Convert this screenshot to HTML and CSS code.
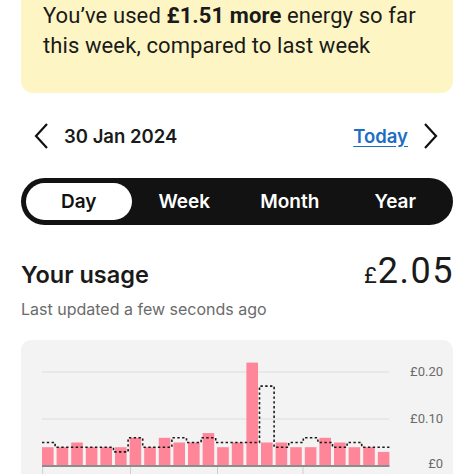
FILE: index.html
```html
<!DOCTYPE html>
<html>
    <head>
        <link rel="stylesheet" href="styles.css">
    </head>
    <body>
        <div class="page">
            <div class="notice">
                <p>You’ve used <b>£1.51 more</b> energy so far this week, compared to last week</p>
            </div>

            <div class="date-row">
                <svg class="chev" viewBox="0 0 16 28"><polyline points="14,2 3,14 14,26"/></svg>
                <span class="date">30 Jan 2024</span>
                <a class="today" href="#">Today</a>
                <svg class="chev" viewBox="0 0 16 28"><polyline points="2,2 13,14 2,26"/></svg>
            </div>

            <div class="tabs">
                <div class="tab active">Day</div>
                <div class="tab">Week</div>
                <div class="tab">Month</div>
                <div class="tab">Year</div>
            </div>

            <div class="usage">
                <h2>Your usage</h2>
                <div class="total"><span class="pound">£</span>2.05</div>
            </div>
            <p class="updated">Last updated a few seconds ago</p>

            <div class="chart">
                <svg viewBox="0 0 432 150" width="432" height="150">
                    <g class="grid">
                        <line x1="21" y1="32" x2="368" y2="32"/>
                        <line x1="21" y1="79" x2="368" y2="79"/>
                    </g>
                    <g class="ticks">
                        <line x1="21.7" y1="126" x2="21.7" y2="150"/>
                        <line x1="109.5" y1="126" x2="109.5" y2="150"/>
                        <line x1="196.5" y1="126" x2="196.5" y2="150"/>
                        <line x1="282" y1="126" x2="282" y2="150"/>
                    </g>
                    <g class="bars">
                        <rect x="21.0" y="107.2" width="11.6" height="18.8"/>
                        <rect x="35.6" y="107.2" width="11.6" height="18.8"/>
                        <rect x="50.2" y="102.5" width="11.6" height="23.5"/>
                        <rect x="64.8" y="107.2" width="11.6" height="18.8"/>
                        <rect x="79.4" y="107.2" width="11.6" height="18.8"/>
                        <rect x="94.0" y="107.2" width="11.6" height="18.8"/>
                        <rect x="108.6" y="97.8" width="11.6" height="28.2"/>
                        <rect x="123.2" y="107.2" width="11.6" height="18.8"/>
                        <rect x="137.8" y="97.8" width="11.6" height="28.2"/>
                        <rect x="152.4" y="102.5" width="11.6" height="23.5"/>
                        <rect x="167.0" y="102.5" width="11.6" height="23.5"/>
                        <rect x="181.6" y="93.1" width="11.6" height="32.9"/>
                        <rect x="196.2" y="107.2" width="11.6" height="18.8"/>
                        <rect x="210.8" y="102.5" width="11.6" height="23.5"/>
                        <rect x="225.4" y="22.6" width="11.6" height="103.4"/>
                        <rect x="240.0" y="102.5" width="11.6" height="23.5"/>
                        <rect x="254.6" y="102.5" width="11.6" height="23.5"/>
                        <rect x="269.2" y="107.2" width="11.6" height="18.8"/>
                        <rect x="283.8" y="107.2" width="11.6" height="18.8"/>
                        <rect x="298.4" y="97.8" width="11.6" height="28.2"/>
                        <rect x="313.0" y="102.5" width="11.6" height="23.5"/>
                        <rect x="327.6" y="107.2" width="11.6" height="18.8"/>
                        <rect x="342.2" y="107.2" width="11.6" height="18.8"/>
                        <rect x="356.8" y="111.9" width="11.6" height="14.1"/>
                    </g>
                    <!-- last week -->
                    <path class="last-week" d="M21 102.5 H34.1 V107.2 H92.5 V111.9 H107.1 V97.8 H121.7 V107.2 H150.9 V97.8 H165.5 V102.5 H180.1 V97.8 H194.7 V102.5 H238.5 V46.1 H253.1 V107.2 H267.7 V102.5 H282.3 V97.8 H296.9 V102.5 H311.5 V107.2 H326.1 V102.5 H340.7 V107.2 H368.4"/>
                    <line class="axis" x1="21" y1="126" x2="368.4" y2="126"/>
                    <g class="labels">
                        <text x="422" y="35.7">£0.20</text>
                        <text x="422" y="83.3">£0.10</text>
                        <text x="422" y="128.3">£0</text>
                    </g>
                </svg>
            </div>
        </div>
    </body>
</html>
```

FILE: styles.css
```css
* {
    box-sizing: border-box;
}

body {
    margin: 0;
    background: #ffffff;
    color: #1a1a1a;
    font-family: Inter, "Noto Sans", sans-serif;
}

.page {
    height: 474px;
    overflow: hidden;
    padding: 0 21px;
}

.notice {
    margin-top: -20px;
    padding: 21px 22px 32px;
    background: #fdf6c4;
    border-radius: 12px;
    font-family: Roboto, "Noto Sans", sans-serif;
}

.notice p {
    margin: 0;
    font-size: 22px;
    line-height: 30px;
    letter-spacing: 0.1px;
}

.notice b {
    font-weight: 700;
}

.date-row {
    display: flex;
    align-items: center;
    height: 30px;
    margin-top: 28px;
    padding: 0 14px 0 12px;
}

.chev {
    width: 16px;
    height: 28px;
    fill: none;
    stroke: #111111;
    stroke-width: 2.2;
}

.date {
    margin-left: 15px;
    font-size: 18.5px;
    font-weight: 600;
}

.today {
    margin-left: auto;
    margin-right: 15px;
    color: #1b6ec2;
    font-size: 18.5px;
    font-weight: 600;
    text-decoration: underline;
    text-underline-offset: 3px;
}

.tabs {
    display: flex;
    height: 47px;
    margin-top: 27px;
    padding: 5px;
    background: #121212;
    border-radius: 24px;
}

.tab {
    flex: 1;
    display: flex;
    align-items: center;
    justify-content: center;
    border-radius: 19px;
    color: #ffffff;
    font-size: 19px;
    font-weight: 600;
}

.tab.active {
    background: #ffffff;
    color: #111111;
}

.usage {
    display: flex;
    align-items: baseline;
    justify-content: space-between;
    height: 40px;
    margin-top: 26px;
    line-height: 40px;
}

.usage h2 {
    margin: 0;
    font-size: 23.5px;
    font-weight: 600;
}

.total {
    font-family: Roboto, "Noto Sans", sans-serif;
    font-size: 36px;
    font-weight: 400;
    letter-spacing: 1.5px;
    margin-right: -1px;
}

.pound {
    font-size: 22px;
    margin-right: 1px;
    letter-spacing: 0;
}

.updated {
    margin: 8px 0 0;
    color: #6b6b6b;
    font-size: 16px;
    line-height: 20px;
}

.chart {
    height: 150px;
    margin-top: 21px;
    background: #f3f3f3;
    border-radius: 10px;
}

.chart svg {
    display: block;
}

.grid line {
    stroke: #e4e4e4;
    stroke-width: 1.5;
}

.ticks line {
    stroke: #cfcfcf;
    stroke-width: 1;
}

.bars rect {
    fill: #ff8599;
}

.last-week {
    fill: none;
    stroke: #1a1a1a;
    stroke-width: 1.6;
    stroke-dasharray: 2.4 2.4;
}

.axis {
    stroke: #8c8c8c;
    stroke-width: 2;
}

.labels text {
    font-family: Roboto, "Noto Sans", sans-serif;
    fill: #6b6b6b;
    font-size: 13px;
    text-anchor: end;
}
```
